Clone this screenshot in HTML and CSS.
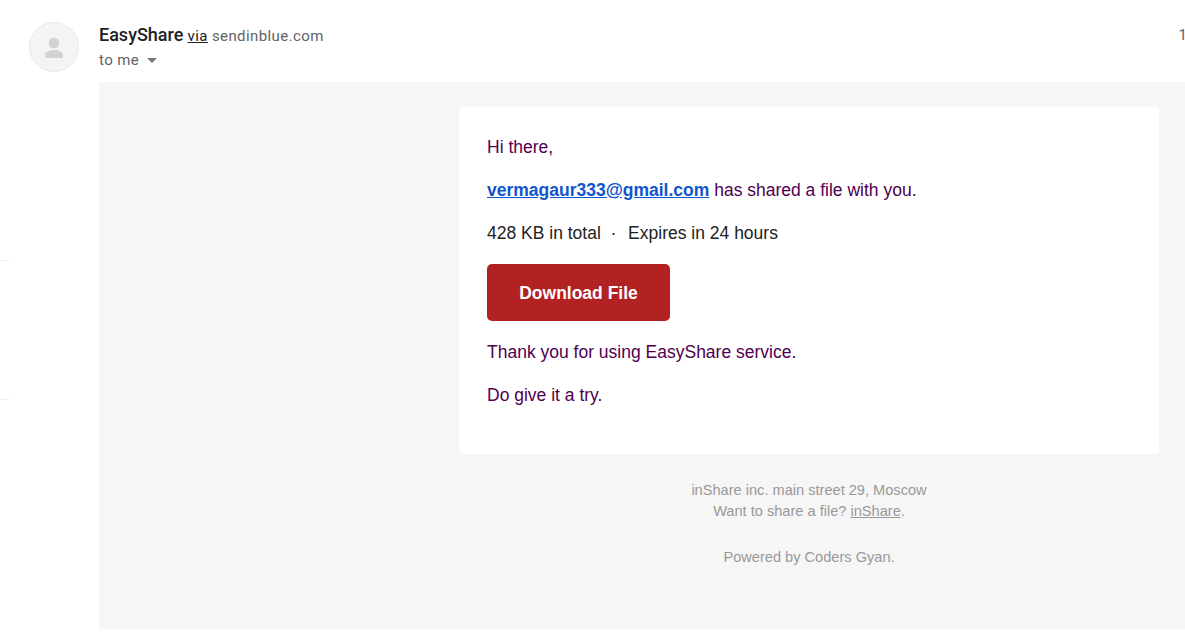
FILE: index.html
```html
<!DOCTYPE html>
<html lang="en">
<head>
<meta charset="utf-8">
<title>EasyShare</title>
<link rel="stylesheet" href="styles.css">
</head>
<body>
<div class="message">
  <div class="rail"><span class="tick tick-a"></span><span class="tick tick-b"></span></div>
  <div class="avatar">
    <svg viewBox="0 0 24 24" width="24" height="24"><circle cx="12" cy="8" r="5.3" fill="#d2d2d2"/><path fill="#d2d2d2" d="M3 20c0-3.5 5-5 9-5s9 1.500 9 5v1.500c0 .8-.7 1.500-1.500 1.500h-15c-.8 0-1.500-.7-1.500-1.500z"/></svg>
  </div>
  <div class="main">
    <header class="head">
      <div class="who">
        <div class="from"><span class="name">EasyShare</span> <span class="via">via</span> <span class="domain">sendinblue.com</span></div>
        <div class="to">to me <span class="caret"></span></div>
      </div>
      <div class="time">1</div>
    </header>
    <section class="panel">
      <div class="column">
        <article class="card">
          <p class="purple">Hi there,</p>
          <p class="purple"><a class="mail" href="#">vermagaur333@gmail.com</a> has shared a file with you.</p>
          <p class="dark">428 KB in total &nbsp;·&nbsp; <span class="expires">Expires in 24 hours</span></p>
          <a class="btn" href="#">Download File</a>
          <p class="purple">Thank you for using EasyShare service.</p>
          <p class="purple">Do give it a try.</p>
        </article>
        <footer class="foot">
          <div>inShare inc. main street 29, Moscow</div>
          <div>Want to share a file? <a class="foot-link" href="#">inShare</a>.</div>
          <div class="powered">Powered by Coders Gyan.</div>
        </footer>
      </div>
    </section>
  </div>
</div>
</body>
</html>
```

FILE: styles.css
```css
html, body {
  margin: 0;
  height: 100%;
  background: #fff;
  overflow: hidden;
}
.message {
  display: flex;
  height: 629px;
  font-family: "Liberation Sans", Arial, sans-serif;
}
.rail {
  width: 9px;
  flex: none;
  display: flex;
  flex-direction: column;
}
.tick {
  display: block;
  height: 1px;
  background: #eeeeee;
}
.tick-a { margin-top: 260px; }
.tick-b { margin-top: 138px; }
.avatar {
  flex: none;
  width: 48px;
  height: 48px;
  margin: 22px 20px 0 20px;
  border: 1px solid #e8e8e8;
  border-radius: 50%;
  background: #f4f4f4;
  display: flex;
  align-items: center;
  justify-content: center;
}
.main {
  flex: 1;
  min-width: 0;
  display: flex;
  flex-direction: column;
}
.head {
  height: 82px;
  flex: none;
  display: flex;
  justify-content: space-between;
  font-family: Roboto, Arial, sans-serif;
}
.who { padding-top: 25px; }
.from {
  font-size: 15px;
  line-height: 20px;
  color: #5f6368;
  letter-spacing: 0.4px;
}
.name {
  font-size: 18px;
  font-weight: 500;
  color: #202124;
  letter-spacing: 0;
}
.via {
  color: #202124;
  text-decoration: underline;
}
.to {
  margin-top: 4px;
  font-size: 15px;
  line-height: 20px;
  color: #5f6368;
  letter-spacing: 0.4px;
  display: flex;
  align-items: center;
}
.caret {
  margin-left: 8px;
  width: 0;
  height: 0;
  border-left: 5px solid transparent;
  border-right: 5px solid transparent;
  border-top: 5px solid #777;
}
.time {
  padding-top: 25px;
  margin-right: -2px;
  font-size: 15px;
  line-height: 20px;
  color: #5f6368;
}
.panel {
  flex: 1;
  background: #f6f6f6;
  padding: 25px 26px 0 360px;
}
.column { width: 700px; }
.card {
  box-sizing: border-box;
  height: 347px;
  background: #fff;
  border-radius: 4px;
  padding: 29px 28px 28px;
  font-size: 17.5px;
  line-height: 23px;
}
.card p { margin: 0 0 20px; }
.purple { color: #500050; }
.dark { color: #222; }
.expires { margin-left: 2px; }
.mail {
  color: #1155cc;
  font-weight: 700;
  text-decoration: underline;
}
.btn {
  display: block;
  width: 183px;
  height: 57px;
  margin: -1px 0 20px;
  border-radius: 5px;
  background: #b22222;
  color: #fff;
  font-size: 17.5px;
  font-weight: 700;
  line-height: 58px;
  text-align: center;
  text-decoration: none;
}
.foot {
  padding-top: 26px;
  text-align: center;
  font-size: 14.6px;
  line-height: 21px;
  color: #999;
}
.foot-link { color: #999; text-decoration: underline; }
.powered { margin-top: 25px; }
```
